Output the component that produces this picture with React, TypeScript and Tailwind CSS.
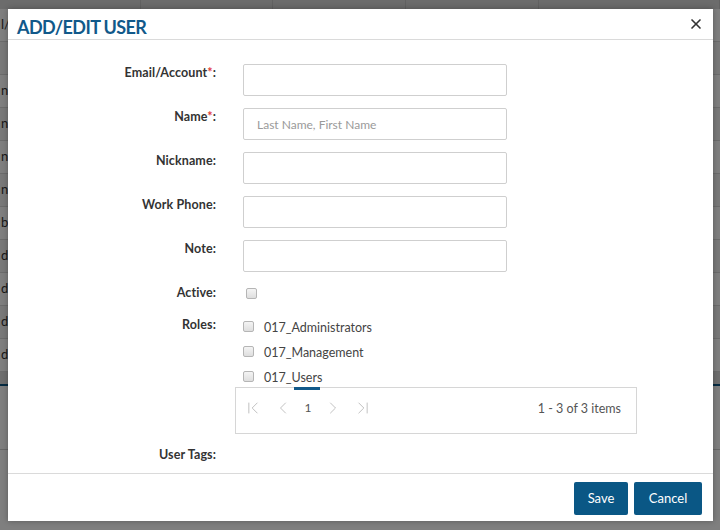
import { X, ChevronLeft, ChevronRight, ChevronFirst, ChevronLast } from "lucide-react";

const font = { fontFamily: "Lato, 'Open Sans', sans-serif" };

const bgRows = ["l/", "", "n", "n", "n", "n", "b", "do", "do", "do", "do"];

function Checkbox() {
  return (
    <span className="inline-block h-[11px] w-[11px] shrink-0 rounded-[2px] border border-[#b5b5b5] bg-gradient-to-b from-[#f4f4f4] to-[#dedede]" />
  );
}

function Field({ label, required, placeholder }: { label: string; required?: boolean; placeholder?: string }) {
  return (
    <div className="flex items-start">
      <div className="w-[208px] text-right text-[12.5px] font-bold tracking-[0.1px] text-[#333]">
        {label}
        {required ? <span className="text-[#e23b3b]">*</span> : null}:
      </div>
      <input
        placeholder={placeholder}
        className="ml-[27px] h-[32px] w-[264px] rounded-[2px] border border-[#cfcfcf] bg-white px-[13px] text-[12px] text-[#333] outline-none placeholder:text-[#9a9a9a]"
        style={font}
      />
    </div>
  );
}

export default function App() {
  const roles = ["017_Administrators", "017_Management", "017_Users"];

  return (
    <div className="relative h-[530px] w-[720px] overflow-hidden bg-white" style={font}>
      {/* page behind the dialog */}
      <div className="flex h-[9px] bg-[#d8d8d8]">
        {[141, 132, 133, 133, 181].map((w, i) => (
          <div key={i} style={{ width: w }} className="border-r border-[#c4c4c4]" />
        ))}
      </div>
      <div className="flex flex-col">
        {bgRows.map((t, i) => (
          <div
            key={i}
            className={`flex h-[33px] items-center border-b border-[#d8d8d8] pl-[1px] text-[13px] text-[#333] ${
              i % 2 ? "bg-[#f2f2f2]" : "bg-white"
            }`}
          >
            <span>{t}</span>
          </div>
        ))}
        <div className="h-[14px] border-b-2 border-[#0a5785] bg-[#dcdcdc]" />
        <div className="h-[64px] border-b border-[#d0d0d0]" />
      </div>
      <div className="absolute inset-0 bg-black/50" />

      {/* dialog */}
      <div className="absolute left-[8px] top-[9px] flex h-[512px] w-[705px] flex-col bg-white shadow-[0_0_6px_rgba(0,0,0,0.3)]">
        <div className="flex h-[31px] items-start justify-between border-b border-[#dadada] pl-[9px] pr-[9px]">
          <h1 className="pt-[7px] text-[18px] leading-[22px] font-bold tracking-[-0.6px] text-[#11598a]">
            ADD/EDIT USER
          </h1>
          <X size={16} strokeWidth={2.5} className="mt-[7px] text-[#333]" />
        </div>

        <div className="flex flex-1 flex-col pt-[24px]">
          <div className="flex flex-col gap-[12px]">
            <Field label="Email/Account" required />
            <Field label="Name" required placeholder="Last Name, First Name" />
            <Field label="Nickname" />
            <Field label="Work Phone" />
            <Field label="Note" />
          </div>

          <div className="mt-[12px] flex items-center">
            <div className="w-[208px] text-right text-[12.5px] font-bold tracking-[0.1px] text-[#333]">Active:</div>
            <span className="ml-[30px] flex">
              <Checkbox />
            </span>
          </div>

          <div className="mt-[13px] flex items-start">
            <div className="w-[208px] text-right text-[12.5px] font-bold tracking-[0.1px] text-[#333]">Roles:</div>
            <div className="ml-[19px] flex flex-col">
              <div className="ml-[8px] flex flex-col gap-[8px] pt-[2px]">
                {roles.map((r) => (
                  <div key={r} className="flex h-[17px] items-center gap-[10px] text-[12.5px] text-[#444]">
                    <Checkbox />
                    <span className="mt-[4px]">{r}</span>
                  </div>
                ))}
              </div>
              <div className="relative mt-[2px] flex h-[47px] w-[402px] items-start justify-between border border-[#d6d6d6] pl-[7px] pr-[15px] pt-[10px]">
                <span className="absolute left-[58px] top-[-1px] h-[3px] w-[26px] bg-[#11598a]" />
                <div className="flex items-center gap-[10px] text-[#b5b5b5]">
                  <ChevronFirst size={20} strokeWidth={1} />
                  <ChevronLeft size={20} strokeWidth={1} />
                  <span className="w-[10px] text-center text-[12px] text-[#555]">1</span>
                  <ChevronRight size={20} strokeWidth={1} />
                  <ChevronLast size={20} strokeWidth={1} />
                </div>
                <span className="pt-[2px] text-[12.5px] text-[#555]">1 - 3 of 3 items</span>
              </div>
            </div>
          </div>

          <div className="mt-[12px] flex items-center">
            <div className="w-[208px] text-right text-[12.5px] font-bold tracking-[0.1px] text-[#333]">User Tags:</div>
          </div>
        </div>

        <div className="flex h-[48px] items-start justify-end gap-[6px] border-t border-[#dadada] pr-[11px] pt-[8px]">
          <button className="h-[33px] w-[54px] rounded-[2px] bg-[#0a5785] text-[13px] text-white">Save</button>
          <button className="h-[33px] w-[68px] rounded-[2px] bg-[#0a5785] text-[13px] text-white">Cancel</button>
        </div>
      </div>
    </div>
  );
}
